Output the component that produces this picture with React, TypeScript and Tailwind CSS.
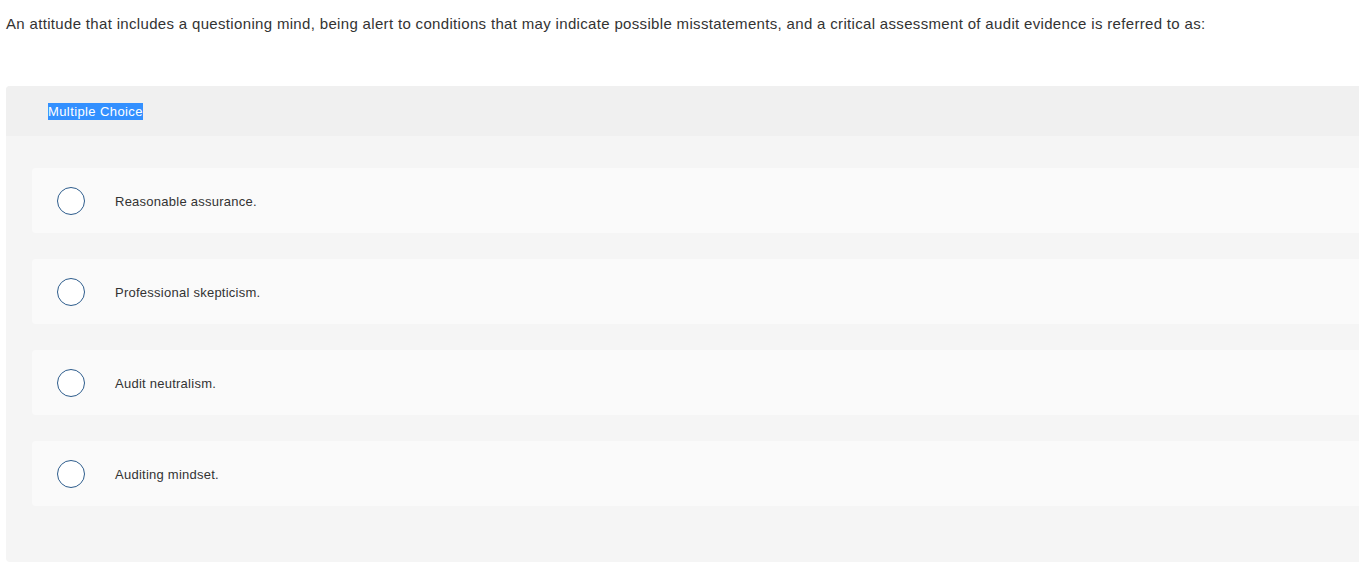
const options = [
  "Reasonable assurance.",
  "Professional skepticism.",
  "Audit neutralism.",
  "Auditing mindset.",
];

export default function App() {
  return (
    <div className="min-h-screen bg-white font-['Liberation_Sans',Arial,sans-serif] text-[#333]">
      <p className="pl-[6px] pt-[14px] text-[15px] leading-[20px] tracking-[0.33px]">
        An attitude that includes a questioning mind, being alert to conditions that may indicate possible misstatements, and a critical assessment of audit evidence is referred to as:
      </p>

      <div className="ml-[6px] mt-[52px] rounded-l-[4px] bg-[#f5f5f5]">
        <div className="flex h-[50px] items-center rounded-tl-[4px] bg-[#f0f0f0] pl-[42px]">
          <span className="bg-[#3390ff] text-[13px] leading-[17px] tracking-[0.4px] text-white">Multiple Choice</span>
        </div>

        <div className="flex flex-col gap-[26px] pl-[26px] pt-[32px] pb-[56px]">
          {options.map((opt) => (
            <div
              key={opt}
              className="flex h-[65px] items-center rounded-l-[4px] bg-[#fafafa] pl-[25px]"
            >
              <span className="h-[28px] w-[28px] shrink-0 rounded-full border-[1.5px] border-[#2d5c8c] bg-white" />
              <span className="ml-[30px] pt-[2px] text-[13px] tracking-[0.25px] text-[#333]">{opt}</span>
            </div>
          ))}
        </div>
      </div>
    </div>
  );
}
